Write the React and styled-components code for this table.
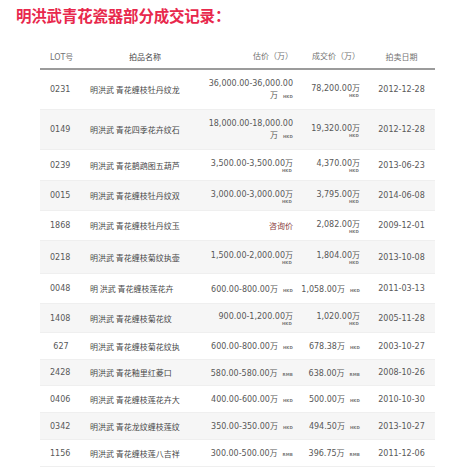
import React from "react";
import styled, { createGlobalStyle } from "styled-components";

const GlobalStyle = createGlobalStyle`
  html, body {
    margin: 0;
    padding: 0;
    background: #fff;
  }
  body {
    font-family: "DejaVu Sans", "Noto Sans CJK SC", sans-serif;
  }
`;

// page wrapper
const Page = styled.div`
  width: 474px;
  height: 467px;
  overflow: hidden;
  padding-top: 6px;
  box-sizing: border-box;
`;

const Title = styled.h1`
  margin: 0 0 0 16px;
  font-family: "Noto Sans CJK SC", sans-serif;
  font-size: 15.5px;
  line-height: 18px;
  font-weight: 700;
  color: #e8284c;
  letter-spacing: -0.2px;
`;

const Table = styled.div`
  width: 395px;
  margin: 20px 0 0 40px;
`;

const cols = "48px 112px 98px 66px 71px";

const HeadRow = styled.div`
  display: grid;
  grid-template-columns: ${cols};
  align-items: center;
  height: 24px;
  border-bottom: 2px solid #9b9b9b;
  font-family: "DejaVu Sans", "Noto Sans CJK SC", sans-serif;
  font-size: 8px;
  color: #727272;
`;

const Row = styled.div`
  display: grid;
  grid-template-columns: ${cols};
  align-items: center;
  height: ${(p) => p.$h}px;
  box-sizing: border-box;
  border-bottom: 1px solid #efefef;
  background: ${(p) => (p.$striped ? "#f6f6f6" : "#fff")};
  font-size: 8px;
  color: #585858;
`;

const Lot = styled.div`
  padding-left: 10px;
  text-align: ${(p) => (p.$center ? "center" : "left")};
  padding-right: ${(p) => (p.$center ? "16px" : "0")};
`;

const Name = styled.div`
  padding-left: 2px;
  font-family: "Noto Sans CJK SC", sans-serif;
  font-size: 8px;
  color: #474747;
  white-space: nowrap;
  text-align: ${(p) => (p.$center ? "center" : "left")};
`;

const Money = styled.div`
  text-align: right;
  padding-right: ${(p) => p.$pr}px;
  line-height: 11px;
  white-space: nowrap;
`;

const Line = styled.div``;

const Wan = styled.span`
  font-family: "Noto Sans CJK SC", sans-serif;
`;

const Cur = styled.span`
  display: ${(p) => (p.$below ? "block" : "inline-block")};
  margin-left: ${(p) => (p.$below ? "0" : "5px")};
  margin-top: ${(p) => (p.$below ? "-1px" : "0")};
  padding-right: ${(p) => (p.$below ? "1px" : "0")};
  font-size: 4px;
  line-height: 5px;
  font-weight: 700;
  color: #7a7a7a;
  letter-spacing: 0.1px;
`;

const Ask = styled.span`
  font-family: "Noto Sans CJK SC", sans-serif;
  color: #8b3f3f;
`;

const DateCell = styled.div`
  text-align: center;
  padding-left: 4px;
`;

const withWan = (s) =>
  s.endsWith("万") ? (
    <>
      {s.slice(0, -1)}
      <Wan>万</Wan>
    </>
  ) : (
    s
  );

const Price = ({ v, pr }) => {
  if (v.ask) {
    return (
      <Money $pr={pr}>
        <Ask>咨询价</Ask>
      </Money>
    );
  }
  const below = v.mode === "below";
  return (
    <Money $pr={pr}>
      {v.lines.map((l, i) => (
        <Line key={i}>
          {withWan(l)}
          {!below && i === v.lines.length - 1 && <Cur>{v.cur}</Cur>}
        </Line>
      ))}
      {below && <Cur $below>{v.cur}</Cur>}
    </Money>
  );
};

const B = (t, cur = "HKD") => ({ lines: [t], cur, mode: "below" });
const I = (t, cur = "HKD") => ({ lines: [t], cur, mode: "inline" });

const rows = [
  { lot: "0231", name: "明洪武 青花缠枝牡丹纹龙", est: { lines: ["36,000.00-36,000.00", "万"], cur: "HKD", mode: "inline" }, deal: B("78,200.00万"), date: "2012-12-28", h: 40 },
  { lot: "0149", name: "明洪武 青花四季花卉纹石", est: { lines: ["18,000.00-18,000.00", "万"], cur: "HKD", mode: "inline" }, deal: B("19,320.00万"), date: "2012-12-28", h: 40 },
  { lot: "0239", name: "明洪武 青花鹊鹉图五葫芦", est: B("3,500.00-3,500.00万"), deal: B("4,370.00万"), date: "2013-06-23", h: 31 },
  { lot: "0015", name: "明洪武 青花缠枝牡丹纹双", est: B("3,000.00-3,000.00万"), deal: B("3,795.00万"), date: "2014-06-08", h: 30 },
  { lot: "1868", name: "明洪武 青花缠枝牡丹纹玉", est: { ask: true }, deal: B("2,082.00万"), date: "2009-12-01", h: 30 },
  { lot: "0218", name: "明洪武 青花缠枝菊纹执壶", est: B("1,500.00-2,000.00万"), deal: B("1,804.00万"), date: "2013-10-08", h: 33 },
  { lot: "0048", name: "明 洪武 青花缠枝莲花卉", est: I("600.00-800.00万"), deal: I("1,058.00万"), date: "2011-03-13", h: 30 },
  { lot: "1408", name: "明洪武 青花缠枝菊花纹", est: B("900.00-1,200.00万"), deal: B("1,020.00万"), date: "2005-11-28", h: 29 },
  { lot: "627", name: "明洪武 青花缠枝菊花纹执", est: I("600.00-800.00万"), deal: I("678.38万"), date: "2003-10-27", h: 27, center: true },
  { lot: "2428", name: "明洪武 青花釉里红菱口", est: I("580.00-580.00万", "RMB"), deal: I("638.00万", "RMB"), date: "2008-10-26", h: 26 },
  { lot: "0406", name: "明洪武 青花缠枝莲花卉大", est: I("400.00-600.00万"), deal: I("500.00万"), date: "2010-10-30", h: 27 },
  { lot: "0342", name: "明洪武 青花龙纹缠枝莲纹", est: I("350.00-350.00万"), deal: I("494.50万"), date: "2013-10-27", h: 27 },
  { lot: "1156", name: "明洪武 青花缠枝莲八吉祥", est: I("300.00-500.00万", "RMB"), deal: I("396.75万", "RMB"), date: "2011-12-06", h: 27 },
];

const App = () => {
  return (
    <>
      <GlobalStyle />
      <Page>
        <Title>明洪武青花瓷器部分成交记录：</Title>
        <Table>
          <HeadRow>
            <Lot>LOT号</Lot>
            <Name $center>拍品名称</Name>
            <Money $pr={5}>估价（万）</Money>
            <Money $pr={4}>成交价（万）</Money>
            <DateCell>拍卖日期</DateCell>
          </HeadRow>
          {rows.map((r, i) => (
            <Row key={r.lot} $h={r.h} $striped={i % 2 === 1}>
              <Lot $center={r.center}>{r.lot}</Lot>
              <Name>{r.name}</Name>
              <Price v={r.est} pr={5} />
              <Price v={r.deal} pr={4} />
              <DateCell>{r.date}</DateCell>
            </Row>
          ))}
        </Table>
      </Page>
    </>
  );
};

export default App;
